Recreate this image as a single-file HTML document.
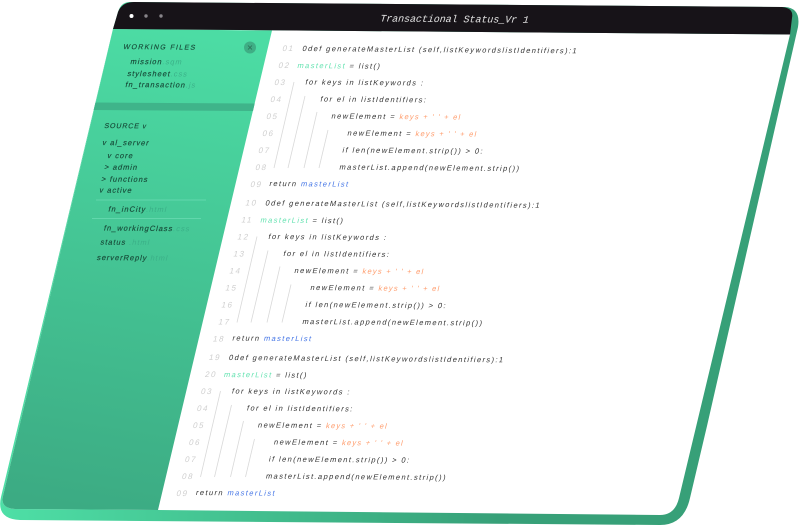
<!DOCTYPE html>
<html><head><meta charset="utf-8"><style>
html,body{margin:0;padding:0;background:#fff;width:800px;height:527px;overflow:hidden}
svg{display:block;filter:blur(.3px)}
text{font-family:"Liberation Sans",sans-serif;font-size:7.5px;letter-spacing:1.4px;fill:#333}
text.n{fill:#cfcfcf;font-size:8px;letter-spacing:1.5px}
.g{fill:#63e2b0}.o{fill:#ff9c6c;letter-spacing:1.25px}.b{fill:#4475e6}
.s text{fill:#174a38;font-size:7.5px;letter-spacing:.95px;stroke:#174a38;stroke-width:.15}
.s text.h{font-size:7px;letter-spacing:1.35px}
.s .f{fill:#3bb088;stroke:none}
.l{stroke:#d9d9d9;stroke-width:.8;fill:none}
</style></head><body>
<svg width="800" height="527" viewBox="0 0 800 527" xmlns="http://www.w3.org/2000/svg">
<defs>
<linearGradient id="side" gradientUnits="userSpaceOnUse" x1="180" y1="30" x2="100" y2="510"><stop offset="0" stop-color="#4cdca4"/><stop offset="1" stop-color="#3cab83"/></linearGradient>
<linearGradient id="edge" gradientUnits="userSpaceOnUse" x1="0" y1="510" x2="500" y2="525"><stop offset="0" stop-color="#4edfa6"/><stop offset="1" stop-color="#37a078"/></linearGradient>
</defs>
<path d="M130 2 L785 7 Q801 8 798 27 L707 426 L690 498 Q684 525 660 525 L20 520 Q-4 519 1 497 L113 29 L118 12 Q121 2 130 2Z" fill="url(#edge)"/>
<path d="M113 29 L790 34.5 L679 498 Q675 515 660 515 L158 510 L15 509 Q0 508 3 496Z" fill="#fff"/>
<path d="M113 29 L272 30.5 L158 510 L15 509 Q0 508 3 496Z" fill="url(#side)"/>
<path d="M95.500 102.500 L254.700 103.500 L253 111 L93.700 110Z" fill="#3fb48a"/>
<path d="M113 29 L118 12 Q122 2 134 2 L782 7 Q794 8 792 18 L790 34.500Z" fill="#171318"/>
<circle cx="131.500" cy="16" r="2" fill="#fff"/><circle cx="146" cy="16" r="1.700" fill="#88858a"/><circle cx="161" cy="16" r="1.700" fill="#88858a"/>
<text transform="matrix(1 .0085 -.1 1 380 21.500)" style="font-family:'Liberation Mono',monospace;font-size:10px;letter-spacing:-.05px;fill:#e4e4e4;font-style:italic">Transactional Status_Vr 1</text>
<circle cx="250" cy="47.500" r="6" fill="#3fae85"/><path d="M248 45.500l4 4m0-4l-4 4" stroke="#2a6f56" stroke-width=".8"/>
<g class="s">
<text class="h" transform="matrix(1 .0085 -.236 1 123 49)">WORKING FILES</text>
<text transform="matrix(1 .0085 -.236 1 130 64)">mission<tspan class="f">.sqm</tspan></text>
<text transform="matrix(1 .0085 -.236 1 127 76)">stylesheet<tspan class="f">.css</tspan></text>
<text transform="matrix(1 .0085 -.236 1 125 87)">fn_transaction<tspan class="f">.js</tspan></text>
<text class="h" style="letter-spacing:.9px" transform="matrix(1 .0085 -.236 1 104 128)">SOURCE v</text>
<text transform="matrix(1 .0085 -.236 1 102 145)">v al_server</text>
<text transform="matrix(1 .0085 -.236 1 107 158)">v core</text>
<text transform="matrix(1 .0085 -.236 1 104 169.500)">&gt; admin</text>
<text transform="matrix(1 .0085 -.236 1 101 181.500)">&gt; functions</text>
<text transform="matrix(1 .0085 -.236 1 99 192.500)">v active</text>
<text transform="matrix(1 .0085 -.236 1 108 211.500)">fn_inCity<tspan class="f">.html</tspan></text>
<text transform="matrix(1 .0085 -.236 1 103.500 230.500)">fn_workingClass<tspan class="f">.css</tspan></text>
<text transform="matrix(1 .0085 -.236 1 100 244.500)">status<tspan class="f"> .html</tspan></text>
<text transform="matrix(1 .0085 -.236 1 96.500 260)">serverReply<tspan class="f">.html</tspan></text>
</g>
<path d="M96 200H206M92 218.500H201" stroke="#6bdcb4" stroke-width=".7"/>

<path class="l" d="M294 82L274 168M305 96L288 168M317 112L304 168M328 130L319 168"/>
<text class="n" transform="matrix(1 .0085 -.236 1 282 51)">01</text><text transform="matrix(1 .0085 -.236 1 302 51)">0def generateMasterList (self,listKeywordslistIdentifiers):1</text>
<text class="n" transform="matrix(1 .0085 -.236 1 278 68)">02</text><text transform="matrix(1 .0085 -.236 1 297 68)"><tspan class="g">masterList</tspan> = list()</text>
<text class="n" transform="matrix(1 .0085 -.236 1 274 85)">03</text><text transform="matrix(1 .0085 -.236 1 305 84.500)">for keys in listKeywords :</text>
<text class="n" transform="matrix(1 .0085 -.236 1 270 102)">04</text><text transform="matrix(1 .0085 -.236 1 320 101.500)">for el in listIdentifiers:</text>
<text class="n" transform="matrix(1 .0085 -.236 1 266 119)">05</text><text transform="matrix(1 .0085 -.236 1 331 118.500)">newElement = <tspan class="o">keys + ' ' + el</tspan></text>
<text class="n" transform="matrix(1 .0085 -.236 1 262 136)">06</text><text transform="matrix(1 .0085 -.236 1 347 135.500)">newElement = <tspan class="o">keys + ' ' + el</tspan></text>
<text class="n" transform="matrix(1 .0085 -.236 1 258 153)">07</text><text transform="matrix(1 .0085 -.236 1 342 152.500)">if len(newElement.strip()) &gt; 0:</text>
<text class="n" transform="matrix(1 .0085 -.236 1 255 170)">08</text><text transform="matrix(1 .0085 -.236 1 339 169.500)">masterList.append(newElement.strip())</text>
<text class="n" transform="matrix(1 .0085 -.236 1 250 187)">09</text><text transform="matrix(1 .0085 -.236 1 269 186)">return <tspan class="b">masterList</tspan></text>

<path class="l" d="M257 236.500L237 322.500M268 250.500L251 322.500M280 266.500L267 322.500M291 284.500L282 322.500"/>
<text class="n" transform="matrix(1 .0085 -.236 1 245 205.500)">10</text><text transform="matrix(1 .0085 -.236 1 265 205.500)">0def generateMasterList (self,listKeywordslistIdentifiers):1</text>
<text class="n" transform="matrix(1 .0085 -.236 1 241 222.500)">11</text><text transform="matrix(1 .0085 -.236 1 260 222.500)"><tspan class="g">masterList</tspan> = list()</text>
<text class="n" transform="matrix(1 .0085 -.236 1 237 239.500)">12</text><text transform="matrix(1 .0085 -.236 1 268 239)">for keys in listKeywords :</text>
<text class="n" transform="matrix(1 .0085 -.236 1 233 256.500)">13</text><text transform="matrix(1 .0085 -.236 1 283 256)">for el in listIdentifiers:</text>
<text class="n" transform="matrix(1 .0085 -.236 1 229 273.500)">14</text><text transform="matrix(1 .0085 -.236 1 294 273)">newElement = <tspan class="o">keys + ' ' + el</tspan></text>
<text class="n" transform="matrix(1 .0085 -.236 1 225 290.500)">15</text><text transform="matrix(1 .0085 -.236 1 310 290)">newElement = <tspan class="o">keys + ' ' + el</tspan></text>
<text class="n" transform="matrix(1 .0085 -.236 1 221 307.500)">16</text><text transform="matrix(1 .0085 -.236 1 305 307)">if len(newElement.strip()) &gt; 0:</text>
<text class="n" transform="matrix(1 .0085 -.236 1 218 324.500)">17</text><text transform="matrix(1 .0085 -.236 1 302 324)">masterList.append(newElement.strip())</text>
<text class="n" transform="matrix(1 .0085 -.236 1 212.500 341.500)">18</text><text transform="matrix(1 .0085 -.236 1 232 340.500)">return <tspan class="b">masterList</tspan></text>

<path class="l" d="M220.500 391L200.500 477M231.500 405L214.500 477M243.500 421L230.500 477M254.500 439L245.500 477"/>
<text class="n" transform="matrix(1 .0085 -.236 1 208.500 360)">19</text><text transform="matrix(1 .0085 -.236 1 228.500 360)">0def generateMasterList (self,listKeywordslistIdentifiers):1</text>
<text class="n" transform="matrix(1 .0085 -.236 1 204.500 377)">20</text><text transform="matrix(1 .0085 -.236 1 223.500 377)"><tspan class="g">masterList</tspan> = list()</text>
<text class="n" transform="matrix(1 .0085 -.236 1 200.500 394)">03</text><text transform="matrix(1 .0085 -.236 1 231.500 393.500)">for keys in listKeywords :</text>
<text class="n" transform="matrix(1 .0085 -.236 1 196.500 411)">04</text><text transform="matrix(1 .0085 -.236 1 246.500 410.500)">for el in listIdentifiers:</text>
<text class="n" transform="matrix(1 .0085 -.236 1 192.500 428)">05</text><text transform="matrix(1 .0085 -.236 1 257.500 427.500)">newElement = <tspan class="o">keys + ' ' + el</tspan></text>
<text class="n" transform="matrix(1 .0085 -.236 1 188.500 445)">06</text><text transform="matrix(1 .0085 -.236 1 273.500 444.500)">newElement = <tspan class="o">keys + ' ' + el</tspan></text>
<text class="n" transform="matrix(1 .0085 -.236 1 184.500 462)">07</text><text transform="matrix(1 .0085 -.236 1 268.500 461.500)">if len(newElement.strip()) &gt; 0:</text>
<text class="n" transform="matrix(1 .0085 -.236 1 181.500 479)">08</text><text transform="matrix(1 .0085 -.236 1 265.500 478.500)">masterList.append(newElement.strip())</text>
<text class="n" transform="matrix(1 .0085 -.236 1 176 496)">09</text><text transform="matrix(1 .0085 -.236 1 195.500 495)">return <tspan class="b">masterList</tspan></text>
</svg>
</body></html>
